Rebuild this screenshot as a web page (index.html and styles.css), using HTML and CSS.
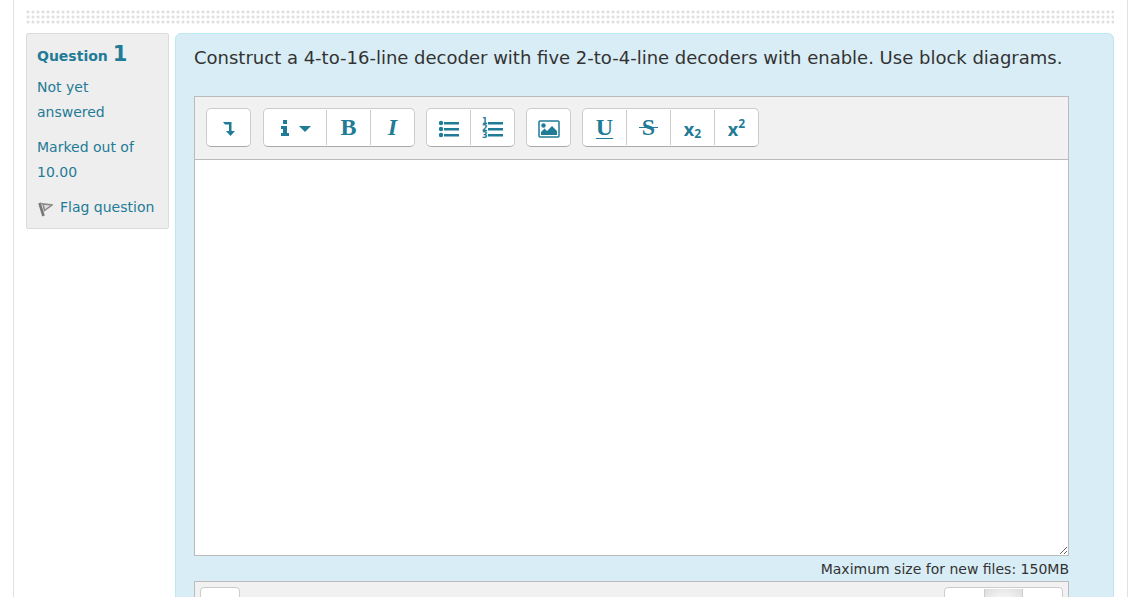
FILE: index.html
```html
<!DOCTYPE html>
<html lang="en">
<head>
  <meta charset="UTF-8">
  <title>Quiz - Question 1</title>
  <link rel="stylesheet" href="styles.css">
</head>
<body>
  <main class="page">
    <div class="dots"></div>

    <div class="question">
      <aside class="info">
        <h3>Question <span class="qno">1</span></h3>
        <div class="state">Not yet answered</div>
        <div class="grade">Marked out of 10.00</div>
        <a class="flag" href="#">
          <svg width="16" height="16" viewBox="0 0 16 16" fill="none" aria-hidden="true">
            <path d="M2.5 2l4 13" stroke="#777" stroke-width="2.6"/>
            <path d="M3 2.5l12 1.500-7.500 5.500L6 3" fill="#ddd" stroke="#8a8a8a" stroke-width="1.5"/>
          </svg>
          <span>Flag question</span>
        </a>
      </aside>

      <section class="content">
        <label class="qtext" for="answer">Construct a 4-to-16-line decoder with five 2-to-4-line decoders with enable. Use block diagrams.</label>

        <div class="editor">
          <div class="toolbar">
            <div class="group">
              <button type="button" aria-label="Show more buttons">
                <svg width="22" height="22" viewBox="0 0 22 22" aria-hidden="true">
                  <path d="M5 5h8.500v9H17l-4.500 5L8 14h3V7.500H7z" fill="currentColor"/>
                </svg>
              </button>
            </div>
            <div class="group">
              <button type="button" class="wide" aria-label="Paragraph styles">
                <svg width="34" height="22" viewBox="0 0 34 22" fill="currentColor" aria-hidden="true">
                  <path d="M5 3h4v4H5zM3 9h6v7h2v3H3v-3h2v-4H3z"/>
                  <path d="M21 9h12l-6 6z"/>
                </svg>
              </button>
              <button type="button" class="serif" aria-label="Bold">B</button>
              <button type="button" class="serif italic" aria-label="Italic">I</button>
            </div>
            <div class="group">
              <button type="button" aria-label="Unordered list">
                <svg width="22" height="22" viewBox="0 0 22 22" fill="currentColor" aria-hidden="true">
                  <circle cx="3" cy="6" r="2.2"/>
                  <circle cx="3" cy="12" r="2.2"/>
                  <circle cx="3" cy="18" r="2.2"/>
                  <path d="M6 5h15v2.500H6zM6 11h15v2.500H6zM6 17h15v2.500H6z"/>
                </svg>
              </button>
              <button type="button" aria-label="Ordered list">
                <svg class="numbers" width="22" height="24" viewBox="0 0 22 24" fill="currentColor" aria-hidden="true">
                  <text x="0" y="8">1</text>
                  <text x="0" y="15">2</text>
                  <text x="0" y="22">3</text>
                  <path d="M6 6h15v2.500H6zM6 12h15v2.500H6zM6 18h15v2.500H6z"/>
                </svg>
              </button>
            </div>
            <div class="group">
              <button type="button" aria-label="Image">
                <svg width="22" height="22" viewBox="0 0 22 22" aria-hidden="true">
                  <rect x="1" y="4" width="20" height="16" rx="1" fill="none" stroke="currentColor" stroke-width="1.5"/>
                  <circle cx="5.5" cy="8.5" r="2.2" fill="currentColor"/>
                  <path d="M3 18v-3l3.500-3.500L9 14l5-5 5 5v4z" fill="currentColor"/>
                </svg>
              </button>
            </div>
            <div class="group">
              <button type="button" class="serif underline" aria-label="Underline">U</button>
              <button type="button" class="serif" aria-label="Strike through">
                <span class="strike">S</span>
              </button>
              <button type="button" class="script" aria-label="Subscript">x<sub>2</sub></button>
              <button type="button" class="script" aria-label="Superscript">x<sup>2</sup></button>
            </div>
          </div>
          <textarea id="answer"></textarea>
        </div>

        <div class="maxsize">Maximum size for new files: 150MB</div>

        <div class="filemanager">
          <button type="button" class="fm-btn" aria-label="Add file"></button>
          <div class="fm-views">
            <button type="button" aria-label="Icons"></button>
            <button type="button" class="active" aria-label="Details"></button>
            <button type="button" aria-label="Tree"></button>
          </div>
        </div>
      </section>
    </div>
  </main>
</body>
</html>
```
FILE: styles.css
```css
* {
  box-sizing: border-box;
}

body {
  margin: 0;
  background: #fff;
  color: #333;
  font-family: Verdana, "DejaVu Sans", sans-serif;
  font-size: 14px;
}

.page {
  margin: 0 3px 0 13px;
  padding: 10px 13px 0 12px;
  border: 1px solid #e1e1e1;
  border-width: 0 1px;
}

.dots {
  height: 15px;
  margin-bottom: 8px;
  background: radial-gradient(circle at 2px 2px, #e0e0e0 1px, #fff 2px) 0 0 / 5px 5px;
}

.question {
  display: flex;
  align-items: flex-start;
  gap: 6px;
}

/* left info box */
.info {
  flex: 0 0 143px;
  padding: 8px 10px;
  background: #eee;
  border: 1px solid #dcdcdc;
  border-radius: 2px;
  color: #1f7b96;
  line-height: 25px;
}

.info h3 {
  margin: 0 0 6px;
  font-size: 14px;
  line-height: 25px;
}

.qno {
  font-size: 21px;
}

.state,
.grade {
  margin-bottom: 10px;
}

.flag {
  display: flex;
  align-items: center;
  gap: 7px;
  color: inherit;
  text-decoration: none;
  white-space: nowrap;
}

.flag svg {
  flex: none;
  margin-top: 3px;
}

/* right answer box */
.content {
  flex: 1;
  min-width: 0;
  padding: 11px 44px 20px 18px;
  background: #d9edf6;
  border: 1px solid #bce8f1;
  border-radius: 6px;
}

.qtext {
  display: block;
  margin-bottom: 25px;
  font-size: 18px;
  line-height: 26px;
}

.editor {
  border: 1px solid #bbb;
}

.toolbar {
  display: flex;
  flex-wrap: wrap;
  gap: 11px;
  padding: 11px 11px 12px;
  background: #f1f1f1;
  border-bottom: 1px solid #bbb;
}

.group {
  display: flex;
  justify-content: center;
  min-width: 45px;
  padding: 1px 0;
  background: #fff;
  border: 1px solid #ccc;
  border-bottom-color: #aaa;
  border-radius: 5px;
}

.group:first-child {
  margin-right: 1px;
}

.group button {
  display: flex;
  align-items: center;
  justify-content: center;
  width: 44px;
  height: 35px;
  padding: 0;
  background: none;
  border: 0;
  border-right: 1px solid #ccc;
  color: #1f7b96;
}

.group button:last-child {
  width: 43px;
  border-right: 0;
}

.group .wide {
  width: 63px;
}

.group .serif {
  font: bold 24px "Liberation Serif", serif;
}

.group .italic {
  font-style: italic;
}

.group .underline {
  text-decoration: underline;
  text-decoration-thickness: 1px;
  text-underline-offset: 3px;
}

.strike {
  padding: 0 3px;
  background: linear-gradient(currentColor, currentColor) center / 100% 1px no-repeat;
}

.group .script {
  padding-top: 2px;
  font: bold 18px "Open Sans", sans-serif;
}

.script sub,
.script sup {
  font-size: 12px;
  line-height: 1;
}

.script sub {
  margin-top: 10px;
}

.script sup {
  margin-bottom: 10px;
}

.numbers text {
  font: bold 8px "DejaVu Sans", sans-serif;
}

textarea {
  display: block;
  width: 100%;
  height: 395px;
  padding: 8px;
  border: 0;
  outline: 0;
  resize: vertical;
  background: #fff;
  font: inherit;
}

.maxsize {
  padding-top: 2px;
  line-height: 23px;
  text-align: right;
}

.filemanager {
  display: flex;
  justify-content: space-between;
  padding: 5px;
  background: #f1f1f1;
  border: 1px solid #bbb;
}

.fm-btn,
.fm-views {
  height: 34px;
  background: #fff;
  border: 1px solid #ccc;
  border-radius: 4px;
}

.fm-btn {
  width: 40px;
}

.fm-views {
  display: flex;
  padding: 1px 0;
}

.fm-views button {
  width: 39px;
  padding: 0;
  background: none;
  border: 0;
}

.fm-views .active {
  background: radial-gradient(#fff, #ddd);
  border-left: 1px solid #ccc;
  border-right: 1px solid #ccc;
}
```
